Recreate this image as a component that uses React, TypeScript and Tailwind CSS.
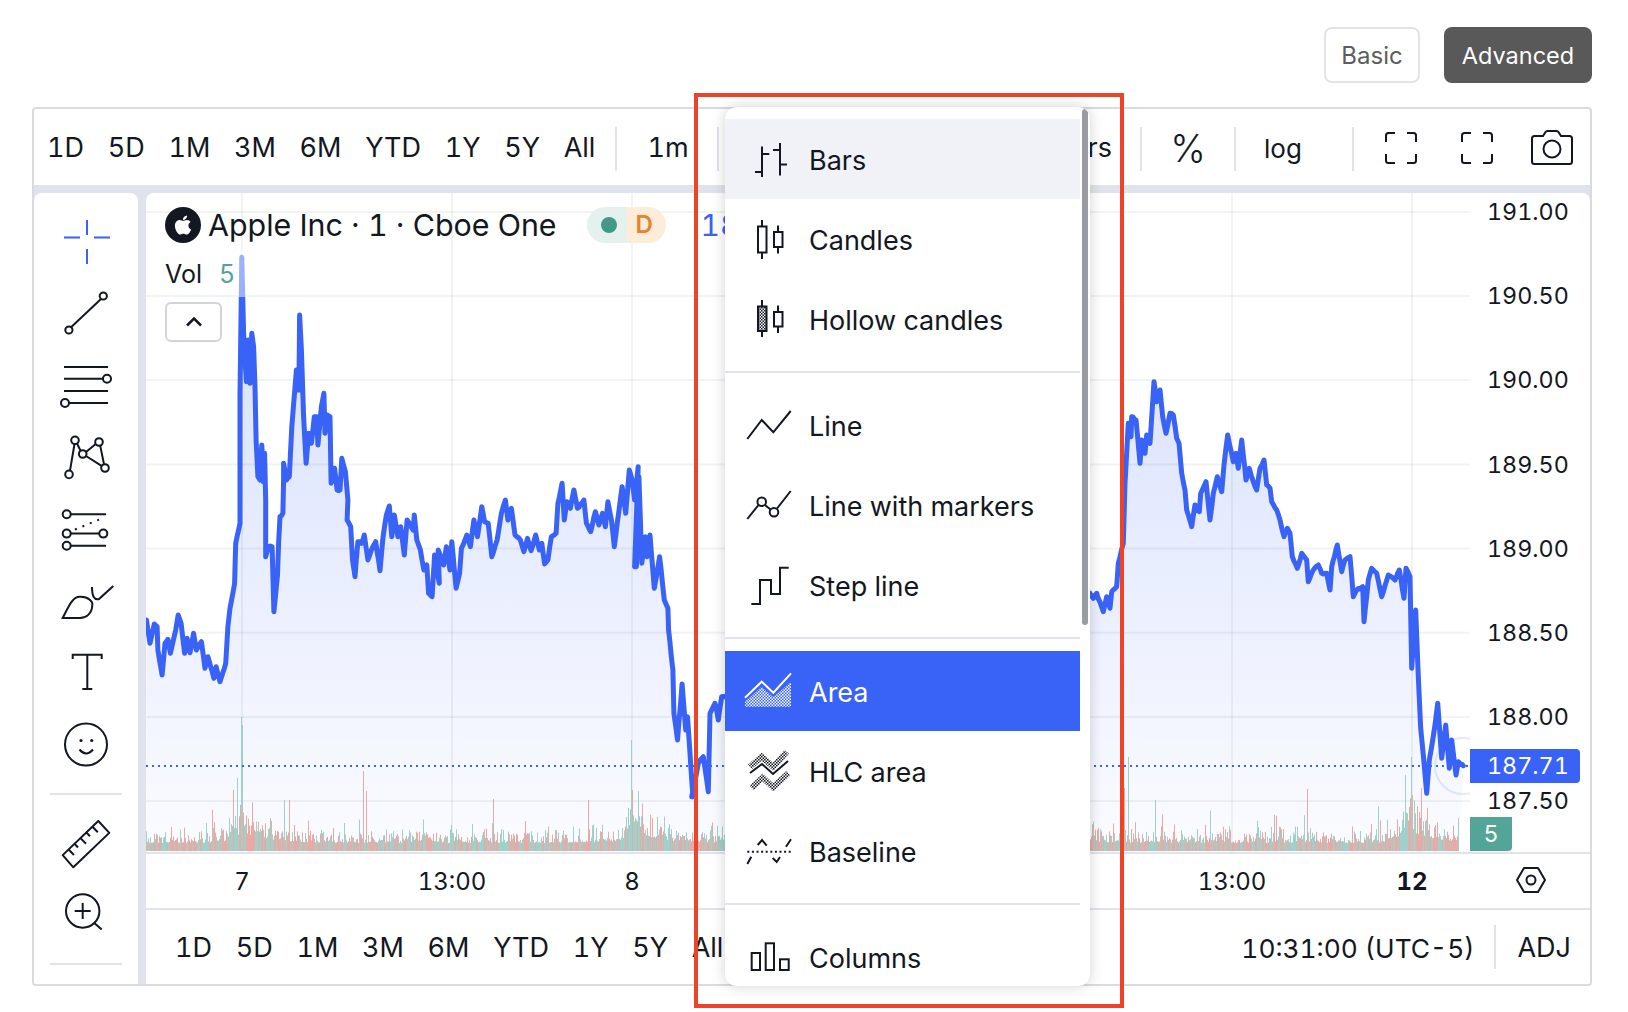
import React from "react";
import { FaApple } from "react-icons/fa";

type Seg = { ox: number; oy: number; sx: number; sy: number; p: number[] };
const Z7 = { ox: 140, oy: 200, sx: 2.8, sy: 3 };
const Z8 = { ox: 140, oy: 480, sx: 2.8, sy: 3 };
const Z3 = { ox: 690, oy: 550, sx: 3, sy: 3 };
const Z9 = { ox: 1080, oy: 360, sx: 3, sy: 3 };

const segments: Seg[] = [
  { ...Z8, p: [18,420,28,490,40,432,48,440,50,510,62,585,70,490,78,478,85,520,100,450,107,405,115,430,125,520,132,475,140,518,150,460,158,510,172,485,182,565,190,530,207,595,213,560,224,605,240,550,246,440,252,385,265,310,268,190,280,130] },
  { ...Z7, p: [280,880,280,580,285,172,290,400,295,500,298,545,303,420,308,550,313,400,318,440,322,560,325,720,330,830,336,840,341,735,345,845,349,760,352,900] },
  { ...Z8, p: [352,60,352,230,360,200,370,200,375,395,385,285,388,190,392,110,400,100,402,0] },
  { ...Z7, p: [402,790,410,840,418,830,425,680,438,510,445,570,447,345,452,450,458,650,465,790,472,700,480,730,488,650,495,650,498,735,508,620,515,580,518,700,525,645,532,650,535,850,545,805,552,870,560,870,565,775,575,815,582,900] },
  { ...Z8, p: [580,120,590,140,595,240,602,290,610,185,620,190,628,165,638,240,650,205,660,185,672,272,680,175,690,105,698,78,705,170,712,105,722,170,730,140,740,225,748,120,765,150,768,105,775,180,785,210,795,270,803,255,808,340,818,350,825,225,838,310,835,210,850,255,858,200,868,270,873,185,885,325,895,280,900,205,915,165,925,200,935,120,945,170,957,80,965,125,975,130,985,230,1000,180,1012,100,1023,60,1030,120,1040,85,1050,165,1065,180,1075,215,1085,175,1095,212,1108,165,1118,210,1125,190,1133,252,1142,240,1152,170,1165,160,1170,70,1182,10,1188,120,1195,65,1205,85,1215,30,1225,85,1243,60,1250,130,1262,155,1275,95,1285,135,1295,100,1303,140,1310,65,1320,120,1328,200,1340,100,1350,20,1360,100,1370,-30] },
  { ...Z7, p: [1378,840,1385,900,1395,800] },
  { ...Z8, p: [1385,260,1390,260,1397,-10,1405,250,1415,170,1420,230,1428,165,1440,325,1455,230,1468,360,1478,385,1480,450,1492,570,1495,700,1505,780,1518,612,1528,750,1533,710,1540,820,1548,950] },
  { ...Z3, p: [5,740,25,640,40,620,55,725,60,490,75,460,85,510,95,440,105,440] },
  { ...Z9, p: [30,700,40,715,50,700,70,755,80,710,90,745,95,695,110,680,115,610,130,550,135,370,145,190,153,230,155,170,168,180,180,310,185,240,195,280,200,225,210,250,222,65,230,125,240,90,248,170,258,220,270,160,280,165,290,235,297,250,305,340,315,390,320,450,335,500,345,435,358,455,362,400,378,365,390,480,400,400,412,350,425,395,432,315,443,225,450,260,460,305,468,280,475,325,485,240,498,360,508,325,520,365,530,390,540,325,552,300,560,375,570,385,575,425,590,450,600,480,612,530,622,505,630,520,637,590,652,625,665,580,680,600,685,665,700,630,715,615,725,640,740,640,750,690,755,620,772,555,785,635,795,600,810,590,820,710,830,690,848,680,852,785,865,660,875,625,890,640,905,710,925,645,945,660,958,630,972,715,978,625,990,650,995,925,1007,750,1015,950,1022,1105,1030,1185,1040,1300,1048,1200,1058,1140,1065,1095,1073,1030,1085,1195,1097,1095,1108,1225,1115,1140,1128,1245,1135,1205,1150,1217] },
];

function rng(seed: number) {
  let s = seed;
  return () => {
    s = (s + 0x6d2b79f5) | 0;
    let t = Math.imul(s ^ (s >>> 15), 1 | s);
    t = (t + Math.imul(t ^ (t >>> 7), 61 | t)) ^ t;
    return ((t ^ (t >>> 14)) >>> 0) / 4294967296;
  };
}

function buildLine() {
  const pts: [number, number][] = [];
  segments.forEach((s) => {
    for (let i = 0; i < s.p.length; i += 2) pts.push([s.ox + s.p[i] / s.sx, s.oy + s.p[i + 1] / s.sy]);
  });
  const r = rng(11);
  const out: [number, number][] = [pts[0]];
  for (let i = 1; i < pts.length; i++) {
    const [x0, y0] = pts[i - 1];
    const [x1, y1] = pts[i];
    const n = Math.min(6, Math.floor(Math.abs(x1 - x0) / 1.4));
    for (let k = 1; k < n; k++) {
      const t = k / n;
      out.push([x0 + (x1 - x0) * t, y0 + (y1 - y0) * t + (r() - 0.5) * 1.6]);
    }
    out.push([x1, y1]);
  }
  return out;
}
const linePts = buildLine();
const lineD = linePts.map((p, i) => `${i ? "L" : "M"}${p[0].toFixed(1)} ${p[1].toFixed(1)}`).join("");
const areaD = `${lineD}L1460 852L146 852Z`;

function buildVolume() {
  const r = rng(5);
  const opens = [241, 632, 1022, 1411];
  const peaks: Record<number, [number, number]> = {
    241: [717, 0], 242: [725, 0], 237: [778, 0], 233: [790, 1], 631: [740, 0], 632: [790, 1], 363: [771, 1], 366: [791, 1], 493: [799, 1], 588: [800, 1], 284: [800, 0], 289: [800, 1], 1128: [757, 0], 1124: [788, 1], 1307: [789, 1], 1411: [757, 0], 1421: [788, 1], 1405: [775, 0], 1155: [800, 0],
  };
  let g = "";
  let red = "";
  for (let x = 146; x <= 1458; x++) {
    if (x > 730 && x < 1088) continue;
    const d = Math.min(...opens.map((o) => Math.abs(x - o) * (x < o ? 2.5 : 1)));
    const env = 1 + 1.6 * Math.exp(-d / 24);
    let h = (7 + r() * r() * 22) * env;
    if (r() < 0.025) h += 14 + r() * 12;
    let isRed = r() < 0.5;
    let y = 850 - h;
    const pk = peaks[x];
    if (pk) {
      y = pk[0];
      isRed = pk[1] === 1;
    }
    const seg = `M${x + 0.5} 851V${y.toFixed(1)}`;
    if (isRed) red += seg;
    else g += seg;
  }
  return { g, red };
}
const vol = buildVolume();

const gridY = [212, 296, 380, 464.5, 548.5, 632.7, 716.9, 801];
const gridX = [242, 452, 632, 842, 1022, 1232, 1412];

const S = ({ children, w = 48, h = 48, vb }: { children: React.ReactNode; w?: number; h?: number; vb?: string }) => (
  <svg width={w} height={h} viewBox={vb ?? `0 0 ${w} ${h}`} fill="none" stroke="currentColor" strokeWidth={2} className="overflow-visible shrink-0">
    {children}
  </svg>
);

const Checker = ({ id, color }: { id: string; color: string }) => (
  <pattern id={id} width={3} height={3} patternUnits="userSpaceOnUse">
    <rect x={0} y={0} width={1.5} height={1.5} fill={color} stroke="none" />
    <rect x={1.5} y={1.5} width={1.5} height={1.5} fill={color} stroke="none" />
  </pattern>
);

const toolIcons: React.ReactNode[] = [
  <S key="c"><g stroke="#3962f7"><path d="M25 7V22M25 36V51M2 24.5H18M32 24.5H48" transform="translate(0 -5)" /></g></S>,
  <S key="l"><circle cx={41.3} cy={7} r={3.6} /><circle cx={6.9} cy={41} r={3.6} /><path d="M39 10L9.3 38" /></S>,
  <S key="f"><path d="M2 6H46M2 17.7H41M2 30H46M7 42H46" /><circle cx={45} cy={17.7} r={4} /><circle cx={3} cy={42} r={4} /></S>,
  <S key="n"><g transform="translate(0 -2)"><circle cx={13} cy={9.3} r={3.8} /><circle cx={37} cy={11} r={3.8} /><circle cx={20.7} cy={23} r={3.8} /><circle cx={43} cy={37} r={3.8} /><circle cx={7} cy={43.4} r={3.8} /><path d="M15 12.5L18.7 20M24 21L33.7 13M24 25L40 35.2M38.2 14.6L42 33.3M12.5 13L8 39.7" /></g></S>,
  <S key="p"><path d="M8.7 10.3H44M8.7 29.6H37M8.7 41.8H44" /><circle cx={4.7} cy={10.3} r={4} /><circle cx={4.7} cy={29.6} r={4} /><circle cx={41.3} cy={29.6} r={4} /><circle cx={4.7} cy={41.8} r={4} /><path d="M13 25.5L41 14" strokeDasharray="2 6" /></S>,
  <S key="b"><path d="M30 11Q30 25 37 23L51.3 10M0.7 42C6 32 10 20.5 18 20.8C27 20.5 31 26 30.3 29C30 38 24 42 18 42Z" /></S>,
  <S key="t"><g transform="translate(0 1)"><path d="M10.7 11V6.7H39.7V11M25.3 6.7V41M20.3 41H30.3" /></g></S>,
  <S key="s"><g transform="translate(0 1.5)"><circle cx={24} cy={24} r={21} /><circle cx={19} cy={20} r={1.6} fill="currentColor" stroke="none" /><circle cx={29.7} cy={20} r={1.6} fill="currentColor" stroke="none" /><path d="M17.5 29Q24 37 31 29" /></g></S>,
];

const Divider = () => <div className="w-[2px] h-11 bg-[#e0e3eb] shrink-0" />;

const ranges = ["1D", "5D", "1M", "3M", "6M", "YTD", "1Y", "5Y", "All"];
const Ranges = () => (
  <div className="flex items-center gap-[23.7px]">
    {ranges.map((r) => (
      <span key={r}>{r}</span>
    ))}
  </div>
);

const FullIcon = () => (
  <S w={32} h={32}>
    <path d="M1 10V3.5Q1 1 3.5 1H10M22 1H28.5Q31 1 31 3.5V10M31 22V28.5Q31 31 28.5 31H22M10 31H3.5Q1 31 1 28.5V22" />
  </S>
);

const prices = ["191.00", "190.50", "190.00", "189.50", "189.00", "188.50", "188.00", "187.50"];
const times: [string, number, boolean][] = [
  ["7", 96, false],
  ["13:00", 306, false],
  ["8", 486, false],
  ["13:00", 1086, false],
  ["12", 1266, true],
];

type Item = { label: string; icon: React.ReactNode; cls?: string };
const menu: Item[][] = [
  [
    { label: "Bars", cls: "bg-[#f1f2f7]", icon: <S><path d="M16 11.5V42M16 19H23.3M9 37H16M34 8V40.5M27 15H34M34 29.5H41" /></S> },
    { label: "Candles", icon: <S><rect x={12} y={11.5} width={8.5} height={26} /><path d="M16 5V11.5M16 37.5V44M32 10.5V17M32 32V38.5" /><rect x={28} y={17} width={8.5} height={15} /></S> },
    { label: "Hollow candles", icon: <S><defs><Checker id="ck1" color="#131722" /></defs><rect x={12} y={11.5} width={8.5} height={24.5} fill="url(#ck1)" /><path d="M16 5V11.5M16 36V42M32 10.5V17M32 31.5V38" /><rect x={28} y={17} width={8.5} height={14.5} /></S> },
  ],
  [
    { label: "Line", icon: <S><path d="M1.3 38L15.7 19L27.3 31.3L44.7 10" /></S> },
    { label: "Line with markers", icon: <S><path d="M1.3 38L12.5 24M19 24L24.5 28.5M31 27.5L44.7 10" /><circle cx={15.7} cy={20.7} r={4.3} /><circle cx={28} cy={31.3} r={4.3} /></S> },
    { label: "Step line", icon: <S><path d="M5.3 43H14V19H25V33H34V6.7H42.7" /></S> },
  ],
  [
    { label: "Area", cls: "bg-[#3962f7] text-white", icon: <S><defs><Checker id="ck2" color="#ffffff" /></defs><path d="M-1 39.7V34.7L15.7 19.7L27.3 30.3L45 14.7V39.7Z" fill="url(#ck2)" stroke="none" /><path d="M-1 30.7L15.7 14.7L27.3 25.7L45 6.3" /></S> },
    { label: "HLC area", icon: <S><defs><Checker id="ck3" color="#131722" /></defs><path d="M4 19.7L15.7 9.7L27.3 19.7L40.7 4.7" stroke="url(#ck3)" strokeWidth={6} /><path d="M4 26L16 17L27 27L42 14" /><path d="M5.7 41L16.7 30.7L27.3 40.3L42.3 26.3" stroke="url(#ck3)" strokeWidth={6} /></S> },
    { label: "Baseline", icon: <S><path d="M1.3 24.7H47" strokeDasharray="2 2.6" /><path d="M1.3 37L5.3 29.7M11.7 18L16 13L20.7 18.7M26.7 31L30.7 35L34 30M40 19.7L45 12.3" /></S> },
  ],
  [{ label: "Columns", icon: <S><rect x={5.7} y={20} width={8.3} height={17} /><rect x={19.7} y={10.3} width={8.3} height={26.7} /><rect x={34} y={26.3} width={8.7} height={10.7} /></S> }],
];

export default function App() {
  return (
    <div className="relative w-[1628px] h-[1012px] overflow-hidden bg-white text-[#131722] tabular-nums font-['Inter','Liberation_Sans',sans-serif]">
      <div className="flex justify-end gap-6 pt-[27px] pr-9">
        <button className="w-24 h-14 rounded-lg border-2 border-[#e2e3e5] text-[24px] text-[#5d5d5d] pt-[1px]">Basic</button>
        <button className="w-[148px] h-14 rounded-lg bg-[#595959] text-[23.5px] text-white pt-[1px]">Advanced</button>
      </div>

      <div className="mt-6 ml-8 w-[1560px] h-[879px] border-2 border-[#d9dbdf] rounded flex flex-col overflow-hidden">
        <div className="h-[76px] shrink-0 flex items-center text-[27px] pt-[3px] pl-[13px] pr-[17px]">
          <Ranges />
          <div className="ml-5"><Divider /></div>
          <span className="ml-[30px] mr-[28px]">1m</span>
          <Divider />
          <span className="ml-auto mr-7">Indicators</span>
          <Divider />
          <span className="w-[92px] text-center text-[38px] font-light">%</span>
          <Divider />
          <span className="pl-[28px] w-[116px] text-[26px]">log</span>
          <Divider />
          <div className="ml-[31px] -mt-[2px]"><FullIcon /></div>
          <div className="ml-11 -mt-[2px]"><FullIcon /></div>
          <div className="ml-[38px] -mt-[2px]">
            <S w={42} h={35}>
              <path d="M3.5 6H12L14.5 2Q15 1 16.5 1H25.5Q27 1 27.5 2L30 6H38.5Q41 6 41 8.5V31.5Q41 34 38.5 34H3.5Q1 34 1 31.5V8.5Q1 6 3.5 6Z" />
              <circle cx={21} cy={19} r={8.5} />
            </S>
          </div>
        </div>

        <div className="flex-1 flex gap-2 bg-[#e0e3eb] pt-2 min-h-0">
          <div className="w-[104px] shrink-0 bg-white rounded-t-lg flex flex-col items-center pt-[13px]">
            {toolIcons.map((ic, i) => (
              <div key={i} className="h-[71.6px] w-full flex items-center justify-center shrink-0">{ic}</div>
            ))}
            <div className="w-[72px] h-[2px] bg-[#e0e3eb] mt-[14px] shrink-0" />
            <div className="h-[96px] flex items-center justify-center shrink-0">
              <S>
                <g transform="translate(0 2.5)">
                  <path d="M0.7 33.6L36.3 -0.5L47.3 11.4L11.3 45.8Z" strokeLinejoin="round" />
                  <path d="M6.6 28L12 33.5M12.5 22.3L16 26M18.5 16.6L24 22.2M24.4 11L28 14.7M30.4 5.3L35.8 10.8" />
                </g>
              </S>
            </div>
            <div className="h-11 flex items-center justify-center shrink-0">
              <S>
                <circle cx={20.7} cy={22} r={16.7} />
                <path d="M12.7 22H28.7M20.7 14V30M32.3 34L39.7 40.5" />
              </S>
            </div>
            <div className="w-[72px] h-[2px] bg-[#e0e3eb] mt-7 shrink-0" />
          </div>

          <div className="flex-1 bg-white flex flex-col rounded-t-lg overflow-hidden min-w-0">
            <div className="h-[659px] shrink-0 flex">
              <div className="relative w-[1324px] h-[659px] shrink-0 overflow-hidden">
                <svg width={1324} height={659} viewBox="146 193 1324 659" fill="none" className="block">
                  <defs>
                    <linearGradient id="areaFill" gradientUnits="userSpaceOnUse" x1="0" y1="296" x2="0" y2="852">
                      <stop offset="0" stopColor="#3962f7" stopOpacity={0.2} />
                      <stop offset="1" stopColor="#3962f7" stopOpacity={0.02} />
                    </linearGradient>
                  </defs>
                  <path d={areaD} fill="url(#areaFill)" />
                  {gridY.map((y) => (
                    <path key={y} d={`M146 ${y}H1470`} stroke="#2a2e39" strokeOpacity={0.06} strokeWidth={2} />
                  ))}
                  {gridX.map((x) => (
                    <path key={x} d={`M${x} 193V852`} stroke="#2a2e39" strokeOpacity={0.06} strokeWidth={2} />
                  ))}
                  <path d={vol.g} stroke="#9fd0ca" strokeWidth={1} />
                  <path d={vol.red} stroke="#e9a9a5" strokeWidth={1} />
                  <path d="M146 766H1470" stroke="#3962f7" strokeWidth={2} strokeDasharray="2 4" />
                  <circle cx={1463} cy={766} r={28} stroke="#3962f7" strokeOpacity={0.14} strokeWidth={2} />
                  <path d={lineD} stroke="#3962f7" strokeWidth={5} strokeLinejoin="round" strokeLinecap="round" />
                </svg>

                <div className="absolute left-[90px] top-[57px] w-[12px] h-[47px] bg-white/50" />
                <div className="absolute left-[19px] top-[14px] flex items-center">
                  <span className="w-9 h-9 rounded-full bg-[#131722] flex items-center justify-center text-white"><FaApple size={22} /></span>
                  <span className="ml-[7px] text-[30.4px] leading-9 whitespace-nowrap">Apple Inc · 1 · Cboe One</span>
                  <span className="ml-[30px] flex h-9 w-[79px] rounded-full overflow-hidden text-[24px] font-semibold leading-9">
                    <span className="w-10 bg-[#e4f1ee] flex items-center justify-end pr-[10px]"><span className="w-4 h-4 rounded-full bg-[#44988a]" /></span>
                    <span className="flex-1 bg-[#fdecd8] text-[#e5832f] flex items-center justify-center pr-1">D</span>
                  </span>
                  <span className="ml-[35px] text-[30px] leading-9 text-[#3962f7]">187.71</span>
                </div>
                <div className="absolute left-[19px] top-[64px] flex items-center text-[25px] leading-[34px]">
                  <span>Vol</span>
                  <span className="ml-[17px] text-[#53a597]">5</span>
                </div>
                <div className="absolute left-[19px] top-[109px] w-[57px] h-[40px] rounded-md border-2 border-[#d1d4dc] flex items-center justify-center">
                  <S w={16} h={10}><path d="M1 8.5L8 1.5L15 8.5" strokeWidth={2.5} /></S>
                </div>
              </div>

              <div className="relative flex-1 text-[23.3px]">
                <div className="flex flex-col pl-[17px] pt-[2px]">
                  {prices.map((p) => (
                    <div key={p} className="h-[84.2px] leading-[34px] shrink-0">{p}</div>
                  ))}
                </div>
                <div className="absolute left-0 top-[556px] w-[110px] h-[34px] rounded-r bg-[#3962f7] text-white pl-[17px] leading-[34px]">187.71</div>
                <div className="absolute left-0 top-[624px] w-[42px] h-[34px] rounded-br bg-[#53a597] text-white text-center leading-[34px]">5</div>
              </div>
            </div>

            <div className="relative h-[56px] shrink-0 border-t-2 border-[#e0e3eb] text-[24px]">
              {times.map(([t, x, b], i) => (
                <span key={i} className={`absolute top-[11px] leading-[34px] -translate-x-1/2 ${b ? "font-bold" : ""}`} style={{ left: x }}>{t}</span>
              ))}
              <div className="absolute left-[1370px] top-[13px]">
                <S w={30} h={26}>
                  <path d="M8 1H22L29 13L22 25H8L1 13Z" strokeLinejoin="round" />
                  <circle cx={15} cy={13} r={4.5} />
                </S>
              </div>
            </div>

            <div className="flex-1 border-t-2 border-[#e0e3eb] flex items-center text-[27px] pl-[29px] pr-[19px]">
              <div className="pt-[3px]"><Ranges /></div>
              <span className="ml-auto pt-[3px] text-[26.3px]">10:31:00 (UTC-5)</span>
              <div className="ml-5 mr-[21px]"><Divider /></div>
              <span className="pt-[3px]">ADJ</span>
            </div>
          </div>
        </div>
      </div>

      <div className="absolute left-[725px] top-[107px] w-[365px] h-[879px] rounded-xl bg-white shadow-[0_0_14px_rgba(0,0,0,0.18)] overflow-hidden z-10">
        <div className="w-[355px] pt-3 flex flex-col">
          {menu.map((group, gi) => (
            <div key={gi} className={gi ? "border-t-2 border-[#e0e3eb] mt-3 pt-3" : ""}>
              {group.map((it) => (
                <div key={it.label} className={`h-20 flex items-center pl-[21px] text-[27px] ${it.cls ?? ""}`}>
                  {it.icon}
                  <span className="ml-[15px] pt-[5px]">{it.label}</span>
                </div>
              ))}
            </div>
          ))}
        </div>
        <div className="absolute left-[357px] top-[2px] w-[6px] h-[516px] rounded-full bg-[#9a9ca1]" />
      </div>

      <div className="absolute left-[694px] top-[93px] w-[430px] h-[915px] border-[4.5px] border-[#ee4326] z-20" />
    </div>
  );
}
